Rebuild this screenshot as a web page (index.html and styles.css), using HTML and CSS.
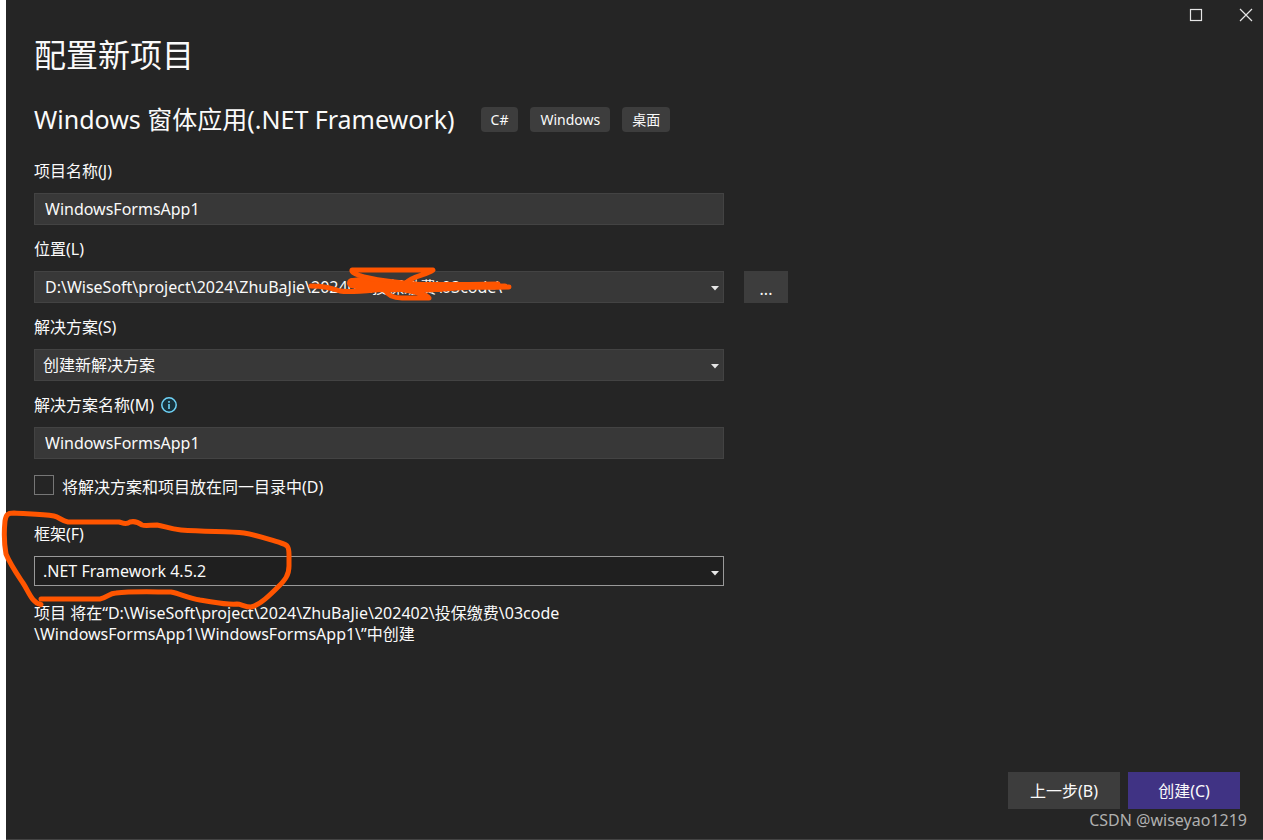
FILE: index.html
```html
<!DOCTYPE html>
<html lang="zh-CN">
<head>
    <meta charset="UTF-8">
    <meta name="viewport" content="width=device-width, initial-scale=1.0">
    <title>配置新项目</title>
    <link rel="stylesheet" href="styles.css">
</head>
<body>
    <div class="window">
        <div class="window-controls">
            <button type="button" class="window-btn" aria-label="最大化">
                <svg width="14" height="14" viewBox="0 0 14 14"><rect x="1.5" y="1.5" width="11" height="11" fill="none" stroke="#e6e6e6" stroke-width="1.2"/></svg>
            </button>
            <button type="button" class="window-btn" aria-label="关闭">
                <svg width="14" height="14" viewBox="0 0 14 14"><path d="M1 1L13 13M13 1L1 13" stroke="#e6e6e6" stroke-width="1.2"/></svg>
            </button>
        </div>

        <main class="content">
            <h1 class="page-title">配置新项目</h1>
            <div class="template">
                <h2 class="template-name">Windows 窗体应用(.NET Framework)</h2>
                <span class="tag">C#</span>
                <span class="tag">Windows</span>
                <span class="tag">桌面</span>
            </div>

            <form class="form">
                <div class="field">
                    <label for="project-name">项目名称(J)</label>
                    <input class="control" type="text" id="project-name" value="WindowsFormsApp1">
                </div>

                <div class="field">
                    <label for="location">位置(L)</label>
                    <div class="select-box">
                        <select class="control location" id="location">
                            <option>D:\WiseSoft\project\2024\ZhuBaJie\202402\投保缴费\03code\</option>
                        </select>
                        <svg class="caret" width="8" height="5" viewBox="0 0 8 5"><path d="M0 0H8L4 4.5Z" fill="#e6e6e6"/></svg>
                        <!-- pen strokes over the path -->
                        <svg class="ink ink-path" width="210" height="40" viewBox="305 263 210 40">
                            <path d="M311 286C325 286 332 288 340 291C352 293 370 290 400 288C430 286 470 288 509 287M498 284C450 285 400 285 375 282C360 279 350 279 350 283C352 288 380 284 405 290C425 292 450 287 505 286"/>
                            <path d="M406 283C411 276 427 275 433 270H352C350 275 375 281 415 284"/>
                            <path d="M385 290C388 296 394 298 402 298H429C426 293 405 290 385 286"/>
                            <path d="M352 283C370 287 385 288 400 287H440" stroke-width="10"/>
                        </svg>
                    </div>
                    <button type="button" class="browse">...</button>
                </div>

                <div class="field">
                    <label for="solution">解决方案(S)</label>
                    <div class="select-box">
                        <select class="control" id="solution">
                            <option>创建新解决方案</option>
                        </select>
                        <svg class="caret" width="8" height="5" viewBox="0 0 8 5"><path d="M0 0H8L4 4.5Z" fill="#e6e6e6"/></svg>
                    </div>
                </div>

                <div class="field">
                    <label for="solution-name">解决方案名称(M)
                        <svg class="info" width="16" height="16" viewBox="0 0 16 16"><circle cx="8" cy="8" r="7.2" fill="#17313b" stroke="#6fd3f7" stroke-width="1.5"/><path d="M8 7V12M8 4V5.7" stroke="#6fd3f7" stroke-width="1.6"/></svg>
                    </label>
                    <input class="control" type="text" id="solution-name" value="WindowsFormsApp1">
                </div>

                <div class="check">
                    <input type="checkbox" id="same-dir">
                    <label for="same-dir">将解决方案和项目放在同一目录中(D)</label>
                </div>

                <div class="field">
                    <label for="framework">框架(F)</label>
                    <div class="select-box">
                        <select class="control framework" id="framework">
                            <option>.NET Framework 4.5.2</option>
                        </select>
                        <svg class="caret" width="8" height="5" viewBox="0 0 8 5"><path d="M0 0H8L4 4.5Z" fill="#e6e6e6"/></svg>
                        <!-- pen loop round the framework -->
                        <svg class="ink ink-loop" width="310" height="110" viewBox="0 505 310 110">
                            <path d="M41 599H100C107 598 109 593 116 593C132 591 155 592 171 592C181 594 188 598 200 600C214 602 226 605 237 604C241 604 245 607 251 607C260 605 270 595 279 586C285 580 289 575 289 566V555C289 547 288 545 281 543C267 539 257 535 244 533C229 531 207 532 181 530C170 529 164 526 157 525C151 525 145 526 142 525C138 522 134 521 130 522C126 525 123 523 119 522H68C62 521 59 517 54 516C42 514 28 514 14 513C7 513 6 515 5 521C4 531 4 543 6 554C10 564 17 574 23 583C29 592 32 603 41 604.500"/>
                        </svg>
                    </div>
                </div>
            </form>

            <p class="summary">项目 将在“D:\WiseSoft\project\2024\ZhuBaJie\202402\投保缴费\03code<br>\WindowsFormsApp1\WindowsFormsApp1\”中创建</p>
        </main>

        <footer class="footer">
            <div class="actions">
                <button type="button" class="btn">上一步(B)</button>
                <button type="button" class="btn btn-primary">创建(C)</button>
            </div>
            <div class="watermark">CSDN @wiseyao1219</div>
        </footer>
    </div>
</body>
</html>
```

FILE: styles.css
```css
* {
    box-sizing: border-box;
}

body {
    margin: 0;
    padding-left: 6px;
    background-color: #fff;
    color: #fafafa;
    font-family: "Noto Sans", "Noto Sans CJK SC", sans-serif;
    font-size: 16px;
    line-height: 22px;
}

button,
input,
select {
    font: inherit;
    color: inherit;
}

.window {
    display: flex;
    flex-direction: column;
    min-height: 100vh;
    background-color: #252525;
    border-bottom: 1px solid #444;
}

.window-controls {
    display: flex;
    justify-content: flex-end;
    gap: 20px;
    height: 30px;
    padding-right: 2px;
}

.window-btn {
    display: flex;
    align-items: center;
    justify-content: center;
    width: 30px;
    padding: 0;
    border: none;
    background: none;
}

.content {
    flex: 1;
    padding: 4px 28px 0;
}

.page-title {
    margin: 0 0 26px;
    font-size: 32px;
    font-weight: normal;
    line-height: 42px;
}

.template {
    display: flex;
    align-items: center;
    gap: 12px;
    margin-bottom: 24px;
}

.template-name {
    margin: 0 14px 0 0;
    font-size: 25px;
    font-weight: normal;
    line-height: 34px;
}

.tag {
    padding: 2px 10px 1px;
    border-radius: 4px;
    background-color: #3d3d3d;
    font-size: 14px;
}

.form {
    display: grid;
    gap: 13px;
}

.field {
    display: grid;
    grid-template-columns: minmax(0, 690px) 44px;
    gap: 11px 20px;
}

.field label {
    display: flex;
    align-items: center;
    gap: 7px;
    grid-column: 1 / -1;
}

.control {
    display: block;
    width: 100%;
    height: 32px;
    padding: 0 10px;
    border: 1px solid #434343;
    border-radius: 0;
    background-color: #383838;
}

.select-box {
    position: relative;
}

select.control {
    appearance: none;
    padding: 0 24px 0 8px;
}

select.location {
    padding-left: 10px;
}

select.framework {
    height: 30px;
    border-color: #999;
    background-color: #1f1f1f;
}

.caret {
    position: absolute;
    top: 15px;
    right: 5px;
    pointer-events: none;
}

.browse {
    padding: 4px 0 0;
    border: none;
    background-color: #3d3d3d;
}

.check {
    display: flex;
    align-items: center;
    gap: 8px;
    height: 24px;
    margin: 3px 0 11px;
}

.check input {
    appearance: none;
    width: 20px;
    height: 20px;
    margin: 0 0 4px;
    border: 1px solid #767676;
}

/* pen annotations */
.ink {
    position: absolute;
    fill: none;
    stroke: #ff5500;
    stroke-width: 5;
    stroke-linecap: round;
    stroke-linejoin: round;
    pointer-events: none;
}

.ink-path {
    top: -8px;
    left: 271px;
}

.ink-loop {
    top: -51px;
    left: -34px;
}

.summary {
    margin: 17px 0 0;
    line-height: 21px;
}

.footer {
    padding: 0 23px 8px 28px;
}

.actions {
    display: flex;
    justify-content: flex-end;
    gap: 8px;
}

.btn {
    min-width: 112px;
    height: 37px;
    border: none;
    background-color: #3d3d3d;
}

.btn-primary {
    background-color: #403384;
}

.watermark {
    margin-right: -7px;
    color: #b0b0b0;
    text-align: right;
}
```
